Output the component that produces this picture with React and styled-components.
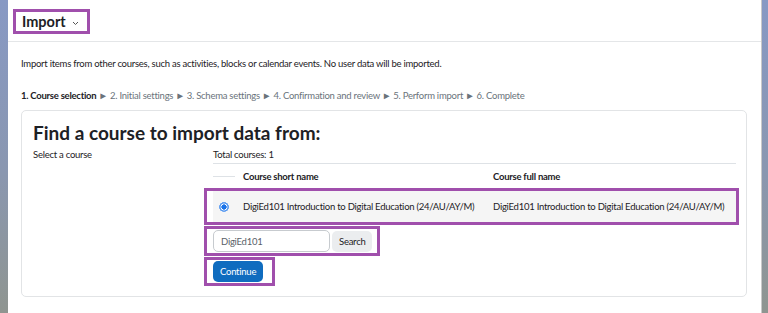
import React from "react";
import styled, { createGlobalStyle } from "styled-components";

const Global = createGlobalStyle`
  html, body { margin: 0; padding: 0; background: #fff; }
  body { font-family: Lato, "Noto Sans", sans-serif; color: #1d2125; }
  * { box-sizing: border-box; }
`;

const Frame = styled.div`
  display: flex;
  width: 768px;
  height: 313px;
  overflow: hidden;
`;

const SideStrip = styled.div`
  flex: 0 0 ${(p) => p.$w}px;
  background: linear-gradient(180deg, #8799c4 0%, #8a97b0 55%, #8f9590 100%);
  border-left: ${(p) => (p.$edge ? "1px solid #c9c9c9" : "none")};
`;

const Main = styled.div`
  flex: 1;
  display: flex;
  flex-direction: column;
  min-width: 0;
`;

const Header = styled.div`
  height: 42px;
  border-bottom: 1px solid #e4e6e8;
  padding: 9px 0 0 5px;
`;

const Highlight = styled.div`
  display: flex;
  align-items: center;
  align-self: ${(p) => (p.$block ? "stretch" : "flex-start")};
  border: 3px solid #a04fac;
  padding: ${(p) => p.$pad || "0"};
  width: ${(p) => (p.$w ? `${p.$w}px` : "auto")};
  height: ${(p) => (p.$h ? `${p.$h}px` : "auto")};
  margin: ${(p) => p.$m || "0"};
`;

const Title = styled.h2`
  margin: 0;
  font-size: 14.5px;
  font-weight: 700;
  display: flex;
  align-items: center;
  gap: 6px;
`;

const Caret = styled.svg`
  width: 7px;
  height: 5px;
  margin-top: 3px;
`;

const Body = styled.div`
  padding: 0 14px 0 13px;
  display: flex;
  flex-direction: column;
`;

const Small = styled.div`
  font-size: 9.5px;
  line-height: 13px;
  letter-spacing: -0.25px;
`;

const Intro = styled(Small)`
  margin-top: 15px;
  color: #1d2125;
`;

const Steps = styled(Small)`
  margin-top: 19px;
  color: #6a737b;
  white-space: nowrap;
`;

const Current = styled.span`
  font-weight: 700;
  color: #1d2125;
`;

const Card = styled.div`
  margin-top: 8px;
  border: 1px solid #e2e4e6;
  border-radius: 5px;
  height: 187px;
  padding: 11px 10px 0 11px;
`;

const Heading = styled.h3`
  margin: 0;
  font-size: 19px;
  line-height: 22px;
  font-weight: 700;
  color: #1d2125;
`;

const FormRow = styled.div`
  display: grid;
  grid-template-columns: 180px 1fr;
  margin-top: 1px;
`;

const Label = styled(Small)`
  padding-top: 3px;
`;

const Field = styled.div`
  display: flex;
  flex-direction: column;
  min-width: 0;
`;

const Total = styled(Small)`
  padding: 3px 0 2px;
  border-bottom: 1px solid #dee2e6;
`;

const Columns = styled(Small)`
  display: grid;
  grid-template-columns: 30px 250px 1fr;
  align-items: center;
  white-space: nowrap;
`;

const HeadRow = styled(Columns)`
  height: 24px;
  font-weight: 700;
`;

const HeadRule = styled.div`
  height: 1px;
  background: #dee2e6;
  margin-right: 8px;
`;

const DataRow = styled(Columns)`
  flex: 1;
  height: 100%;
  background: #f5f5f5;
`;

const Radio = styled.span`
  width: 10px;
  height: 10px;
  border-radius: 50%;
  margin-left: 6px;
  background: radial-gradient(circle, #1a73e8 0 2.4px, #fff 2.9px 3.2px, #5b9bf0 3.7px 5px, transparent 5px);
`;

const SearchInput = styled(Small)`
  width: 117px;
  height: 22px;
  border: 1px solid #c7cbcf;
  border-radius: 5px;
  color: #5a6168;
  display: flex;
  align-items: center;
  padding-left: 7px;
`;

const Button = styled(Small)`
  height: ${(p) => p.$h}px;
  padding: 0 ${(p) => p.$px}px;
  border-radius: 5px;
  display: flex;
  align-items: center;
  background: ${(p) => (p.$primary ? "#0f6cbf" : "#ebedef")};
  color: ${(p) => (p.$primary ? "#fff" : "#1d2125")};
  margin-left: ${(p) => p.$ml || 0}px;
`;

const Stack = styled.div`
  display: flex;
  flex-direction: column;
  gap: 1px;
`;

const arrow = " \u25BA ";

export default function App() {
  const name = "DigiEd101 Introduction to Digital Education (24/AU/AY/M)";
  return (
    <>
      <Global />
      <Frame>
        <SideStrip $w={8} />
        <Main>
          <Header>
            <Highlight $w={77} $h={25} $pad="0 0 0 6px">
              <Title>
                Import
                <Caret viewBox="0 0 7 5">
                  <path d="M1 1l2.5 2.5L6 1" fill="none" stroke="#555" strokeWidth="1" />
                </Caret>
              </Title>
            </Highlight>
          </Header>
          <Body>
            <Intro>
              Import items from other courses, such as activities, blocks or calendar events. No user data will be
              imported.
            </Intro>
            <Steps>
              <Current>1. Course selection</Current>
              {arrow}2. Initial settings{arrow}3. Schema settings{arrow}4. Confirmation and review{arrow}5. Perform
              import{arrow}6. Complete
            </Steps>
            <Card>
              <Heading>Find a course to import data from:</Heading>
              <FormRow>
                <Label>Select a course</Label>
                <Field>
                  <Total>Total courses: 1</Total>
                  <HeadRow>
                    <HeadRule />
                    <span>Course short name</span>
                    <span>Course full name</span>
                  </HeadRow>
                  <Stack>
                    <Highlight $block $h={37} $pad="0 0 0 6px" $m="0 -3px 0 -9px">
                      <DataRow>
                        <Radio />
                        <span>{name}</span>
                        <span>{name}</span>
                      </DataRow>
                    </Highlight>
                    <Highlight $w={176} $h={30} $pad="0 0 0 6px" $m="0 0 0 -9px">
                      <SearchInput>DigiEd101</SearchInput>
                      <Button $h={21} $px={7} $ml={2}>
                        Search
                      </Button>
                    </Highlight>
                    <Highlight $w={71} $h={29} $pad="0 0 0 6px" $m="0 0 0 -9px">
                      <Button $primary $h={21} $px={7}>
                        Continue
                      </Button>
                    </Highlight>
                  </Stack>
                </Field>
              </FormRow>
            </Card>
          </Body>
        </Main>
        <SideStrip $w={7} $edge />
      </Frame>
    </>
  );
}
